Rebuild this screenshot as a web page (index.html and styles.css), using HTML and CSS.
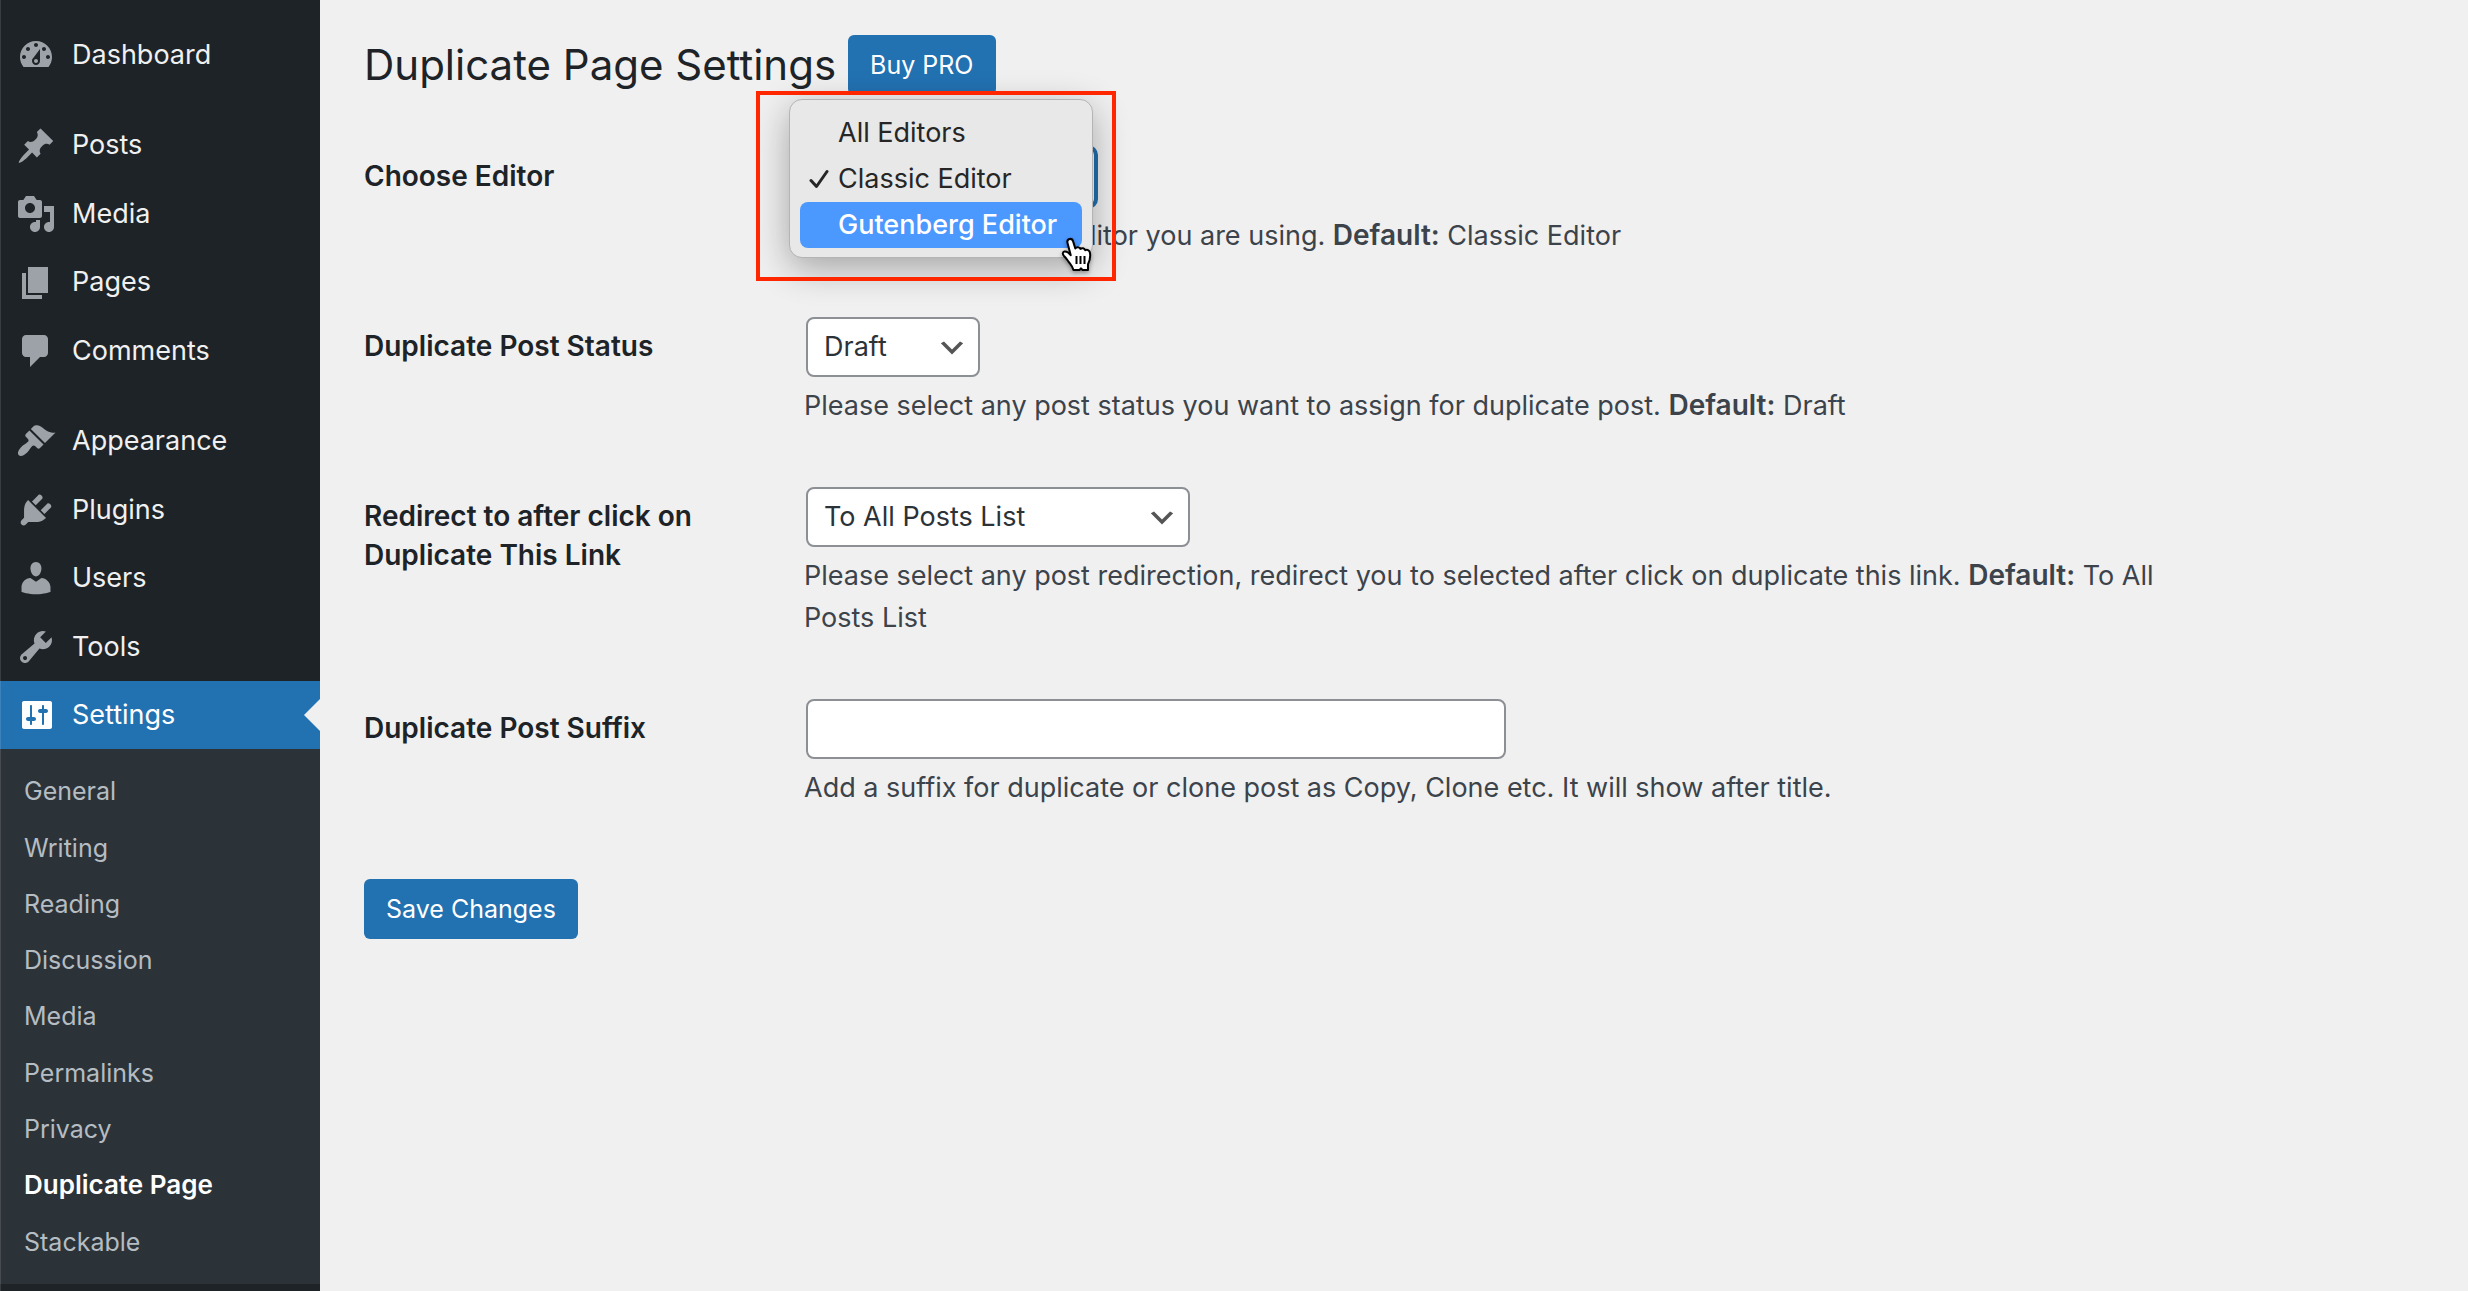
FILE: index.html
```html
<!DOCTYPE html>
<html lang="en">
<head>
<meta charset="utf-8">
<title>Duplicate Page Settings</title>
<link rel="stylesheet" href="styles.css">
</head>
<body>
<nav class="sidebar" aria-label="Main menu">
  <ul class="menu">
    <li><a class="menu-link" href="#"><svg class="menu-icon" viewBox="0 0 20 20" aria-hidden="true"><path d="M3.76 16h12.48c1.1-1.37 1.76-3.11 1.76-5 0-4.42-3.58-8-8-8s-8 3.58-8 8c0 1.89.66 3.63 1.76 5zM10 4c.55 0 1 .45 1 1s-.45 1-1 1-1-.45-1-1 .45-1 1-1zM6 6c.55 0 1 .45 1 1s-.45 1-1 1-1-.45-1-1 .45-1 1-1zm8 0c.55 0 1 .45 1 1s-.45 1-1 1-1-.45-1-1 .45-1 1-1zm-5.37 5.55L12 7v6c0 1.1-.9 2-2 2s-2-.9-2-2c0-.57.24-1.08.63-1.45zM4 10c.55 0 1 .45 1 1s-.45 1-1 1-1-.45-1-1 .45-1 1-1zm12 0c.55 0 1 .45 1 1s-.45 1-1 1-1-.45-1-1 .45-1 1-1zm-5 3c0-.55-.45-1-1-1s-1 .45-1 1 .45 1 1 1 1-.45 1-1z"/></svg>Dashboard</a></li>
    <li class="group-start"><a class="menu-link" href="#"><svg class="menu-icon" viewBox="0 0 20 20" aria-hidden="true"><path d="M10.44 3.02l1.82-1.82 6.36 6.35-1.83 1.82c-1.05-.68-2.48-.57-3.41.36l-.75.75c-.92.93-1.04 2.35-.35 3.41l-1.83 1.82-2.41-2.41-2.8 2.79c-.42.42-3.38 2.71-3.8 2.29s1.86-3.39 2.28-3.81l2.79-2.79L4.1 9.36l1.83-1.82c1.05.69 2.48.57 3.4-.36l.75-.75c.93-.92 1.05-2.35.36-3.41z"/></svg>Posts</a></li>
    <li><a class="menu-link" href="#"><svg class="menu-icon" viewBox="0 0 20 20" aria-hidden="true"><path d="M13 11V4c0-.55-.45-1-1-1h-1.67L9 1H5L3.67 3H2c-.55 0-1 .45-1 1v7c0 .55.45 1 1 1h10c.55 0 1-.45 1-1zM7 4.5c1.38 0 2.5 1.12 2.5 2.5S8.38 9.5 7 9.5 4.5 8.38 4.5 7 5.62 4.5 7 4.5zM14 6h5v10.5c0 1.38-1.12 2.5-2.5 2.5S14 17.88 14 16.5s1.12-2.5 2.5-2.5c.17 0 .34.02.5.05V9h-3V6zm-4 8.05V13h2v3.5c0 1.38-1.12 2.5-2.5 2.5S7 17.88 7 16.5 8.12 14 9.5 14c.17 0 .34.02.5.05z"/></svg>Media</a></li>
    <li><a class="menu-link" href="#"><svg class="menu-icon" viewBox="0 0 20 20" aria-hidden="true"><path d="M6 15V2h10v13H6zm-1 1h8v2H3V5h2v11z"/></svg>Pages</a></li>
    <li><a class="menu-link" href="#"><svg class="menu-icon" viewBox="0 0 20 20" aria-hidden="true"><path d="M5 2h9c1.1 0 2 .9 2 2v7c0 1.1-.9 2-2 2h-2l-5 5v-5H5c-1.1 0-2-.9-2-2V4c0-1.1.9-2 2-2z"/></svg>Comments</a></li>
    <li class="group-start"><a class="menu-link" href="#"><svg class="menu-icon" viewBox="0 0 20 20" aria-hidden="true"><path d="M14.48 11.06L7.41 3.99l1.5-1.5c.5-.56 2.3-.47 3.51.32 1.21.8 1.43 1.28 2.91 2.1 1.18.64 2.45 1.26 4.45.85zm-.71.71L6.7 4.7 4.93 6.47c-.39.39-.39 1.02 0 1.41l1.06 1.06c.39.39.39 1.03 0 1.42-.6.6-1.43 1.11-2.21 1.69-.35.26-.7.53-1.01.84C1.43 14.23.4 16.08 1.4 17.07c.99 1 2.84-.03 4.18-1.36.31-.31.58-.66.85-1.02.57-.78 1.08-1.61 1.69-2.21.39-.39 1.02-.39 1.41 0l1.06 1.06c.39.39 1.02.39 1.41 0z"/></svg>Appearance</a></li>
    <li><a class="menu-link" href="#"><svg class="menu-icon" viewBox="0 0 20 20" aria-hidden="true"><path d="M13.11 4.36L9.87 7.6 8 5.73l3.24-3.24c.35-.34 1.05-.2 1.56.32.52.51.66 1.21.31 1.55zm-8 1.77l.91-1.12 9.01 9.01-1.19.84c-.71.71-2.63 1.16-3.82 1.16H6.14L4.9 17.26c-.59.59-1.54.59-2.12 0-.59-.58-.59-1.53 0-2.12l1.24-1.24v-3.88c0-1.13.4-3.19 1.09-3.89zm7.26 3.97l3.24-3.24c.34-.35 1.04-.21 1.55.31.52.51.66 1.21.31 1.55l-3.24 3.25z"/></svg>Plugins</a></li>
    <li><a class="menu-link" href="#"><svg class="menu-icon" viewBox="0 0 20 20" aria-hidden="true"><path d="M10 9.25c-2.27 0-2.73-3.44-2.73-3.44C7 4.02 7.82 2 9.97 2c2.16 0 2.98 2.02 2.71 3.81 0 0-.41 3.44-2.68 3.44zm0 2.57L12.72 10c2.39 0 4.52 2.33 4.52 4.53v2.49s-3.65 1.13-7.24 1.13c-3.65 0-7.24-1.13-7.24-1.13v-2.49c0-2.25 1.94-4.48 4.47-4.48z"/></svg>Users</a></li>
    <li><a class="menu-link" href="#"><svg class="menu-icon" viewBox="0 0 20 20" aria-hidden="true"><path d="M16.68 9.77c-1.34 1.34-3.3 1.67-4.95.99l-5.41 6.52c-.99.99-2.59.99-3.58 0s-.99-2.59 0-3.57l6.52-5.42c-.68-1.65-.35-3.61.99-4.95 1.28-1.28 3.12-1.62 4.72-1.06l-2.89 2.89 2.82 2.82 2.86-2.87c.53 1.58.18 3.39-1.08 4.65zM3.81 16.21c.4.39 1.04.39 1.43 0 .4-.4.4-1.04 0-1.43-.39-.4-1.03-.4-1.43 0-.39.39-.39 1.03 0 1.43z"/></svg>Tools</a></li>
    <li>
      <a class="menu-link is-current" href="#"><svg class="menu-icon" viewBox="0 0 20 20" aria-hidden="true"><path d="M18 16V4c0-.55-.45-1-1-1H4c-.55 0-1 .45-1 1v12c0 .55.45 1 1 1h13c.55 0 1-.45 1-1zM8 11h1c.55 0 1 .45 1 1s-.45 1-1 1H8v1.5c0 .28-.22.5-.5.5s-.5-.22-.5-.5V13H6c-.55 0-1-.45-1-1s.45-1 1-1h1V5.5c0-.28.22-.5.5-.5s.5.22.5.5V11zm5-2h-1c-.55 0-1-.45-1-1s.45-1 1-1h1V5.500c0-.28.22-.5.5-.5s.5.22.5.5V7h1c.55 0 1 .45 1 1s-.45 1-1 1h-1v5.5c0 .28-.22.5-.5.5s-.5-.22-.5-.5V9z"/></svg>Settings</a>
      <ul class="submenu">
        <li><a class="submenu-link" href="#">General</a></li>
        <li><a class="submenu-link" href="#">Writing</a></li>
        <li><a class="submenu-link" href="#">Reading</a></li>
        <li><a class="submenu-link" href="#">Discussion</a></li>
        <li><a class="submenu-link" href="#">Media</a></li>
        <li><a class="submenu-link" href="#">Permalinks</a></li>
        <li><a class="submenu-link" href="#">Privacy</a></li>
        <li><a class="submenu-link is-active" href="#" aria-current="page">Duplicate Page</a></li>
        <li><a class="submenu-link" href="#">Stackable</a></li>
      </ul>
    </li>
  </ul>
</nav>

<main class="content">
  <header class="page-header">
    <h1 class="page-title">Duplicate Page Settings</h1>
    <a class="button" href="#">Buy PRO</a>
  </header>

  <form class="settings">
    <div class="row">
      <label class="row-label" for="editor">Choose Editor</label>
      <div class="row-field">
        <select class="control select-wide is-focused" id="editor">
          <option>All Editors</option>
          <option selected>Classic Editor</option>
          <option>Gutenberg Editor</option>
        </select>
        <p class="description">Please select which editor you are using. <strong>Default:</strong> Classic Editor</p>

        <div class="popup" role="listbox" aria-label="Choose Editor">
          <div class="option" role="option" aria-selected="false">All Editors</div>
          <div class="option" role="option" aria-selected="true"><svg class="check" viewBox="0 0 20 20" aria-hidden="true"><path d="M2 11.500L7.500 17.500L18 2.500"/></svg>Classic Editor</div>
          <div class="option is-hovered" role="option" aria-selected="false">Gutenberg Editor</div>
        </div>
        <div class="highlight-frame"></div>
        <svg class="cursor" viewBox="0 0 32 36" aria-hidden="true"><path d="M8.500 2C10.500 1.500 11.700 2.800 12.200 4.600L14.300 11.500C15.500 9.800 18.600 9.900 19.400 11.900C21 10.600 23.500 11.200 24.200 13.200C26 12.200 28.400 13.200 28.900 15.500C29.800 20 28.800 23.500 27 27.200L27 33L21.500 33L20 31.300L18.500 33L12.500 33C11.700 29.500 9.500 27.300 7.500 24.600C5.900 22.400 4.900 20.700 3 19C1.200 17.200 1.500 15 3.400 14.500C5.800 13.900 7.800 15.700 9.700 18.100L6.500 6C6 4 6.700 2.500 8.500 2Z"/><path d="M15.500 19v8M19.500 19v8M23.500 19v8"/></svg>
      </div>
    </div>

    <div class="row">
      <label class="row-label" for="status">Duplicate Post Status</label>
      <div class="row-field">
        <select class="control select-small" id="status"><option>Draft</option></select>
        <p class="description">Please select any post status you want to assign for duplicate post. <strong>Default:</strong> Draft</p>
      </div>
    </div>

    <div class="row">
      <label class="row-label" for="redirect">Redirect to after click on Duplicate This Link</label>
      <div class="row-field">
        <select class="control select-medium" id="redirect"><option>To All Posts List</option></select>
        <p class="description">Please select any post redirection, redirect you to selected after click on duplicate this link. <strong>Default:</strong> To All Posts List</p>
      </div>
    </div>

    <div class="row">
      <label class="row-label" for="suffix">Duplicate Post Suffix</label>
      <div class="row-field">
        <input class="control input-text" id="suffix" type="text">
        <p class="description">Add a suffix for duplicate or clone post as Copy, Clone etc. It will show after title.</p>
      </div>
    </div>

    <button class="button save" type="button">Save Changes</button>
  </form>
</main>
</body>
</html>
```
FILE: styles.css
```css
*,
*::before,
*::after {
  box-sizing: border-box;
}

body {
  display: flex;
  min-height: 100vh;
  margin: 0;
  background: #f0f0f0;
  color: #3c434a;
  font: 27px/42px Inter, "Liberation Sans", sans-serif;
}

/* Sidebar */

.sidebar {
  position: relative;
  flex: 0 0 320px;
  padding-top: 21px;
  background: #1d2327;
}

.sidebar::after {
  content: "";
  position: absolute;
  inset: 0 auto 0 0;
  width: 1px;
  background: rgba(255, 255, 255, 0.12);
}

.menu,
.submenu {
  margin: 0;
  padding: 0;
  list-style: none;
}

.group-start {
  margin-top: 22px;
}

.menu-link {
  position: relative;
  display: flex;
  align-items: center;
  gap: 16px;
  padding: 16px;
  color: #f0f0f1;
  line-height: 1.35;
  text-decoration: none;
}

.menu-icon {
  width: 40px;
  height: 40px;
  margin: -4px 0;
  fill: #9ca2a7;
}

.menu-link.is-current {
  background: #2271b1;
  color: #fff;
}

.is-current .menu-icon {
  fill: #fff;
}

.menu-link.is-current::after {
  content: "";
  position: absolute;
  top: 18px;
  right: 0;
  border: 16px solid transparent;
  border-left-width: 0;
  border-right-color: #f0f0f0;
}

.submenu {
  padding: 14px 0;
  background: #2c3338;
}

.submenu-link {
  display: block;
  padding: 10px 24px;
  color: #b5bcc2;
  font-size: 25px;
  line-height: 1.45;
  text-decoration: none;
}

.submenu-link.is-active {
  color: #fff;
  font-size: 26px;
  font-weight: 600;
  line-height: 1.4;
}

/* Content */

.content {
  flex: 1;
  min-width: 0;
  padding: 35px 268px 40px 44px;
}

.page-header {
  display: flex;
  align-items: center;
  gap: 12px;
  margin-bottom: 22px;
}

.page-title {
  margin: 0;
  color: #1d2327;
  font-size: 42px;
  font-weight: 400;
  line-height: 60px;
}

.button {
  height: 60px;
  padding: 0 22px;
  border: 0;
  border-radius: 6px;
  background: #2271b1;
  color: #fff;
  font-family: inherit;
  font-size: 25px;
  line-height: 60px;
  text-decoration: none;
}

.save {
  margin-top: 40px;
}

.row {
  display: grid;
  grid-template-columns: 420px 1fr;
}

.row-label {
  padding: 40px 20px 40px 0;
  color: #1d2327;
  font-size: 28px;
  font-weight: 600;
  line-height: 39px;
}

.row-field {
  position: relative;
  padding: 30px 0 30px 20px;
}

.description {
  margin: 8px 0 0;
}

.description strong {
  font-size: 28px;
  font-weight: 600;
  line-height: 36px;
}

.control {
  display: block;
  height: 60px;
  margin: 0 2px;
  padding: 0 16px;
  border: 2px solid #8c8f94;
  border-radius: 8px;
  background-color: #fff;
  color: #2c3338;
  font: inherit;
}

select.control {
  appearance: none;
  background-image: url("data:image/svg+xml,%3Csvg xmlns='http://www.w3.org/2000/svg' viewBox='0 0 20 20'%3E%3Cpath d='M5 6l5 5 5-5 2 1-7 7-7-7 2-1z' fill='%23555'/%3E%3C/svg%3E");
  background-position: right 10px top 55%;
  background-repeat: no-repeat;
  background-size: 32px;
}

.control.is-focused {
  border-color: #2271b1;
  box-shadow: 0 0 0 2px #2271b1;
}

.select-small {
  width: 174px;
}

.select-wide {
  width: 290px;
}

.select-medium {
  width: 384px;
}

.input-text {
  width: 700px;
}

/* Open list over the editor field */

.popup {
  position: absolute;
  top: -18px;
  left: 5px;
  width: 304px;
  padding: 10px 10px 9px;
  border: 1px solid #b4b4b4;
  border-radius: 13px;
  background: #e8e8e8;
  box-shadow: 0 10px 36px rgba(0, 0, 0, 0.32);
}

.option {
  display: flex;
  align-items: center;
  height: 46px;
  padding-left: 38px;
  border-radius: 8px;
  color: #262626;
}

.option.is-hovered {
  background: #4b98ff;
  color: #fff;
  font-weight: 500;
}

.check {
  width: 20px;
  height: 20px;
  margin: 0 9px 0 -29px;
  fill: none;
  stroke: #262626;
  stroke-width: 3;
  stroke-linecap: round;
  stroke-linejoin: round;
}

.highlight-frame {
  position: absolute;
  top: -26px;
  left: -28px;
  width: 360px;
  height: 190px;
  border: 4px solid #ff2600;
}

.cursor {
  position: absolute;
  top: 120px;
  left: 277px;
  width: 32px;
  height: 36px;
  fill: #fff;
  stroke: #000;
  stroke-width: 2;
  stroke-linejoin: round;
  filter: drop-shadow(0 2px 2px rgba(0, 0, 0, 0.35));
}
```
